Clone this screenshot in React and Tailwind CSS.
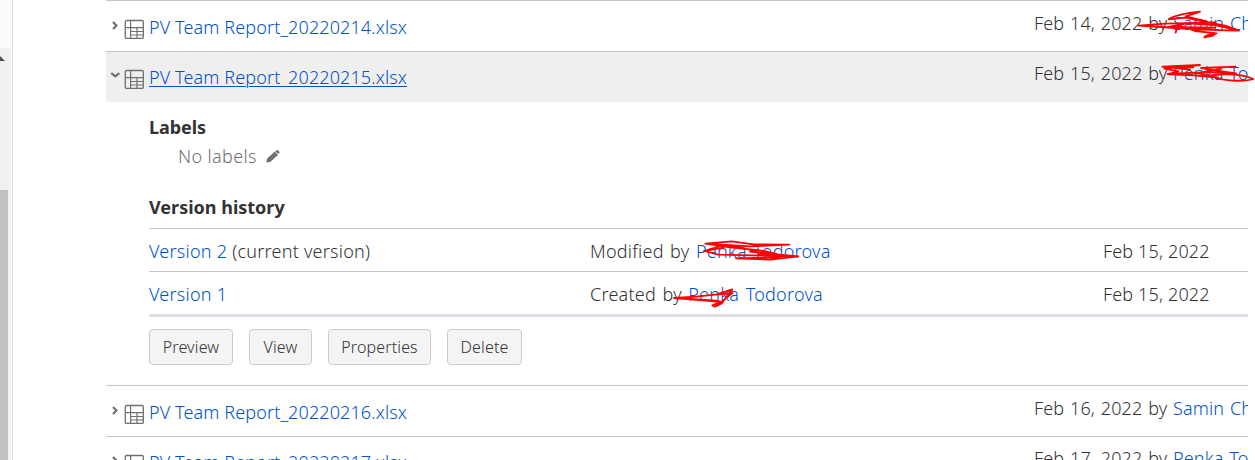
import clsx from "clsx";

const actions = [
  { label: "Preview", width: "w-[84px]" },
  { label: "View", width: "w-[63px]" },
  { label: "Properties", width: "w-[103px]" },
  { label: "Delete", width: "w-[75px]" },
];

function Chevron({ open }) {
  return (
    <svg className="h-3 w-3 shrink-0" viewBox="0 0 12 12" fill="none" stroke="#707070" strokeWidth="2.2">
      {open ? <path d="M2.3 4.2 6.3 7.4l4-3.2" /> : <path d="M4 3l3.4 3.5L4 10" />}
    </svg>
  );
}

function SheetIcon() {
  return (
    <svg className="h-5 w-5 shrink-0" viewBox="0 0 20 20" fill="none" stroke="#707070">
      <rect x="1.3" y="1.5" width="18" height="18" rx="1.2" strokeWidth="1.3" />
      <path d="M1.3 8.7h18M6.6 1.5v18M6.6 12.5h12.7M6.6 16h12.7M13 8.7v10.8" strokeWidth="1.2" />
    </svg>
  );
}

function FileRow({ name, date, author, open, shifted, children }) {
  return (
    <div
      className={clsx(
        "relative flex h-[51px] shrink-0 border-t border-[#c6c6c6]",
        open && "bg-[#efefef]",
        shifted && "pt-px"
      )}
    >
      <div className="flex w-[914px] items-start">
        <div className="ml-[3px] mt-[17px]">
          <Chevron open={open} />
        </div>
        <div className="ml-[3px] mt-[17px]">
          <SheetIcon />
        </div>
        <a
          className={clsx(
            "ml-[5px] mt-[13px] text-[18px] font-light leading-6 tracking-[0.12px] text-[#0052cc]",
            open && "underline underline-offset-2 decoration-1"
          )}
        >
          {name}
        </a>
      </div>
      <div className="w-[228px] overflow-hidden whitespace-nowrap pl-[14px] pt-[9px] text-[18px] font-light leading-6 tracking-[0.12px] [word-spacing:1px]">
        {date} by <a className="text-[#0052cc]">{author}</a>
      </div>
      {children}
    </div>
  );
}

function VersionRow({ version, note, action, last, children }) {
  return (
    <div
      className={clsx(
        "relative flex items-center border-t border-[#c6c6c6] pt-0.5 text-[18px] font-light tracking-[0.24px]",
        last ? "h-[46px] border-b-[3px] border-b-[#dfdfe6]" : "h-[43px]"
      )}
    >
      <div className="w-[441px] whitespace-nowrap">
        <a className="text-[#0052cc]">{version}</a>
        {note && <span> {note}</span>}
      </div>
      <div className="w-[513px] whitespace-nowrap [word-spacing:1.5px]">
        {action} by <a className="text-[#0052cc]">Penka Todorova</a>
      </div>
      <div className="whitespace-nowrap tracking-[0.15px]">Feb 15, 2022</div>
      {children}
    </div>
  );
}

// red pen strokes over the author names
function Scribble({ className, viewBox, d }) {
  return (
    <svg
      className={clsx("pointer-events-none absolute overflow-visible", className)}
      viewBox={viewBox}
      fill="none"
      stroke="#ff0000"
      strokeWidth="5.4"
      strokeLinejoin="round"
      strokeLinecap="round"
    >
      <path d={d} />
    </svg>
  );
}

export default function App() {
  return (
    <div className="flex h-[460px] w-[1255px] overflow-hidden bg-white font-['Noto_Sans','Open_Sans',sans-serif] text-[#333333]">
      {/* Scrollbar */}
      <div className="flex w-[13px] shrink-0 border-r border-[#dedede] bg-[#f8f8f8]">
        <div className="flex w-[10px] flex-col bg-[#f0f0f0]">
          <div className="h-12 bg-[#fafbfc]" />
          <svg className="mt-2 h-[5px] w-[5px]" viewBox="0 0 5 5" fill="#505050">
            <path d="M0 0l5 5H0z" />
          </svg>
          <div className="mt-[129px] w-2 grow bg-[#c1c1c1]" />
        </div>
      </div>

      {/* Attachments */}
      <div className="ml-[93px] flex w-[1142px] shrink-0 flex-col">
        <FileRow name="PV Team Report_20220214.xlsx" date="Feb 14, 2022" author="Samin Ch" shifted>
          <Scribble
            className="left-[1029px] top-[4px] h-[40px] w-[120px]"
            viewBox="0 0 360 120"
            d="M195 20C165 22 120 30 101 43L150 38 200 45M195 20L152 34 215 49 160 40 270 62 312 77 200 74 120 69 10 62 90 56 240 52M10 62L190 72 270 76 312 77 240 60 155 55 100 66 240 68M122 83L128 60 180 78 245 85M239 88C220 87 210 93 208 97L235 92"
          />
        </FileRow>
        <FileRow name="PV Team Report_20220215.xlsx" date="Feb 15, 2022" author="Penka To" open>
          <Scribble
            className="left-[1029px] top-[8px] h-[25px] w-[120px]"
            viewBox="0 165 360 75"
            d="M175 187L82 185 195 180 88 191 130 199 98 207 180 203 250 218 175 211 103 208M82 185L165 194M302 185L198 189 240 196 303 205 210 201 180 206 260 191M215 215C245 203 325 207 355 222 330 231 255 228 230 214"
          />
        </FileRow>

        <div className="flex h-[283px] shrink-0 flex-col pl-[43px]">
          <h2 className="mt-[13px] text-[18px] font-bold leading-6 tracking-[-0.05px]">Labels</h2>
          <div className="mt-[5px] flex items-center pl-[29px] text-[18px] font-light leading-6 tracking-[0.35px] text-[#707070]">
            No labels
            <svg className="ml-2 h-4 w-4" viewBox="0 0 16 16" fill="#707070">
              <path d="M2.2 10.4l7.6-6.8 3.2 3.4-7.5 6.8-4.2.7zM10.3 3.2l1.1-1q.8-.5 1.5.1l1.4 1.4q.6.8 0 1.4l-1 1z" />
            </svg>
          </div>
          <h2 className="mt-[27px] text-[18px] font-bold leading-6">Version history</h2>
          <div className="mt-[9px] flex flex-col">
            <VersionRow version="Version 2" note="(current version)" action="Modified">
              <Scribble
                className="left-[521px] top-[6px] h-[35px] w-[140px]"
                viewBox="0 0 420 105"
                d="M106 26L185 19 250 28 358 29 240 34 106 26M106 26L180 37 270 46 320 57 265 59M160 38L102 48 150 33 220 39 300 62M102 48L145 59 280 62 385 64 300 74 198 70 330 67M240 50L385 64"
              />
            </VersionRow>
            <VersionRow version="Version 1" action="Created" last>
              <Scribble
                className="left-[521px] top-[13px] h-[25px] w-[140px]"
                viewBox="0 150 420 75"
                d="M12 189L80 185 140 178 187 163 155 205 135 215 127 211 155 200 187 174 140 179M12 189L140 197 155 201 90 195 12 189"
              />
            </VersionRow>
          </div>
          <div className="mt-3 flex gap-4">
            {actions.map((action) => (
              <button
                key={action.label}
                className={clsx(
                  "h-9 rounded border border-[#cccccc] bg-[#f4f4f4] text-base font-light tracking-[0.15px]",
                  action.width
                )}
              >
                {action.label}
              </button>
            ))}
          </div>
        </div>

        <FileRow name="PV Team Report_20220216.xlsx" date="Feb 16, 2022" author="Samin Ch" shifted />
        <FileRow name="PV Team Report_20220217.xlsx" date="Feb 17, 2022" author="Penka To" />
      </div>
    </div>
  );
}
